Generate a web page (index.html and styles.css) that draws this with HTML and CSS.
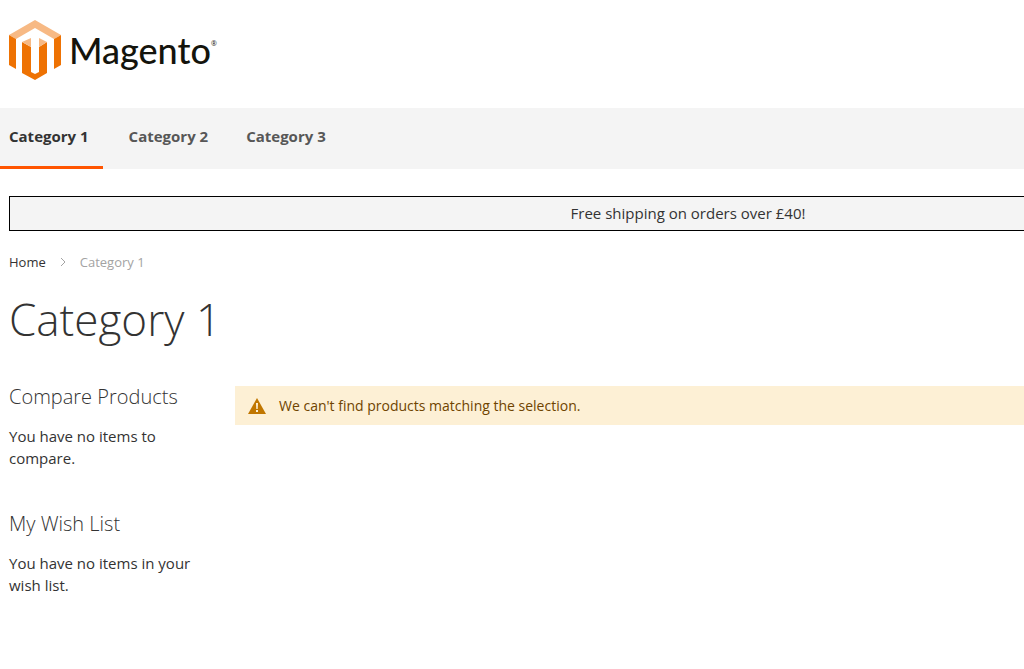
FILE: index.html
```html
<!DOCTYPE html>
<html lang="en">
<head>
<meta charset="utf-8">
<title>Category 1</title>
<link rel="stylesheet" href="styles.css">
</head>
<body>
<div class="page">
  <header class="header">
    <a class="logo" href="#" aria-label="Magento">
      <svg class="logo-mark" viewBox="0 0 52 60" aria-hidden="true">
        <path fill="#f7b984" d="M26 0 52 15 45 19 26 8 7 19 0 15Z"/>
        <path fill="#ee7203" d="M0 15 7 19V49L0 45ZM52 15 45 19V49L52 45ZM13 22 22 27V52L26 54 30 52V27L38 22V53L26 60 13 53Z"/>
        <path fill="#f7b984" d="M13 22 22 18V27ZM38 22 30 18V27Z"/>
      </svg>
      <span class="logo-name">Magento</span><span class="logo-reg">®</span>
    </a>
  </header>
  <nav class="nav">
    <a class="nav-link active" href="#">Category 1</a>
    <a class="nav-link" href="#">Category 2</a>
    <a class="nav-link" href="#">Category 3</a>
  </nav>
  <main class="content">
    <div class="banner">Free shipping on orders over £40!</div>
    <nav class="breadcrumbs" aria-label="Breadcrumb">
      <a href="#">Home</a>
      <svg class="chevron" viewBox="0 0 6 10" aria-hidden="true"><path d="M1 1 5 5 1 9"/></svg>
      <span class="current">Category 1</span>
    </nav>
    <h1 class="title">Category 1</h1>
    <div class="columns">
      <aside class="sidebar">
        <section class="block">
          <h2>Compare Products</h2>
          <p>You have no items to compare.</p>
        </section>
        <section class="block">
          <h2>My Wish List</h2>
          <p>You have no items in your wish list.</p>
        </section>
      </aside>
      <div class="message" role="status">
        <svg class="warning" viewBox="0 0 18 16" aria-hidden="true">
          <path fill="#c07600" d="M9 0 18 16H0Z"/>
          <path fill="#fdf0d5" d="M8 5H10L9.7 11H8.3ZM8 12H10V14H8Z"/>
        </svg>
        <span>We can't find products matching the selection.</span>
      </div>
    </div>
  </main>
</div>
</body>
</html>
```
FILE: styles.css
```css
body {
  margin: 0;
  overflow-x: hidden;
  background: #fff;
  color: #333;
  font-family: "Open Sans", "Noto Sans", sans-serif;
  font-size: 15px;
  line-height: 22px;
}
a { color: inherit; text-decoration: none; }
h1, h2, p { margin: 0; }
.page { min-width: 1376px; }
.header { display: flex; padding: 20px 9px 28px; }
.logo { display: flex; align-items: center; color: #14140c; }
.logo-mark { width: 52px; height: 60px; margin-right: 8px; }
.logo-name { font-family: Lato, sans-serif; font-size: 36px; line-height: 60px; font-weight: 500; }
.logo-reg { align-self: flex-start; padding-top: 16px; font-size: 7px; line-height: 16px; }
.nav { display: flex; gap: 14px; background: #f4f4f4; }
.nav-link {
  padding: 17px 12px 19px;
  border-bottom: 3px solid transparent;
  color: #575757;
  font-weight: 700;
}
.nav-link.active { padding-left: 9px; padding-right: 14px; border-color: #ff5501; color: #333; }
.content { padding: 27px 9px 8px; }
.banner {
  padding: 5px 9px 6px;
  border: 1px solid #000;
  background: #f4f4f4;
  text-align: center;
}
.breadcrumbs {
  display: flex;
  align-items: center;
  margin-top: 20px;
  font-size: 13px;
}
.chevron { width: 6px; height: 10px; margin: 0 14px; fill: none; stroke: #a3a3a3; }
.current { color: #a3a3a3; }
.title { margin-top: 22px; font-size: 44px; line-height: 48px; font-weight: 300; }
.columns { display: flex; align-items: flex-start; margin-top: 43px; }
.sidebar { width: 226px; flex: none; }
.block { margin-bottom: 44px; padding-right: 24px; }
.block h2 { margin-bottom: 17px; font-size: 20px; font-weight: 300; line-height: 22px; }
.message {
  display: flex;
  flex: 1;
  align-items: center;
  gap: 13px;
  padding: 9px 13px 8px;
  background: #fdf0d5;
  color: #6f4400;
  font-size: 14px;
}
.warning { width: 18px; height: 16px; }
```
